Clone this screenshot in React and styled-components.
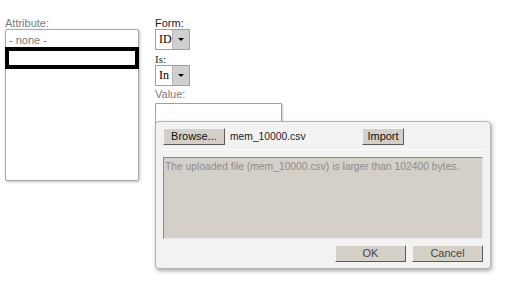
import React from "react";
import styled, { createGlobalStyle } from "styled-components";

const GlobalStyle = createGlobalStyle`
  html, body {
    margin: 0;
    padding: 0;
    background: #ffffff;
  }
  body {
    font-family: "Liberation Sans", Arial, sans-serif;
    font-size: 11px;
  }
`;

const Page = styled.div`
  position: relative;
  width: 532px;
  height: 296px;
  display: flex;
  gap: 16px;
  padding: 18px 0 0 5px;
  box-sizing: border-box;
`;

const Column = styled.div`
  display: flex;
  flex-direction: column;
`;

const Label = styled.div`
  color: ${(p) => (p.$muted ? "#7a7a7a" : "#222")};
  font-family: ${(p) => (p.$serif ? '"Liberation Serif", serif' : '"Liberation Sans", Arial, sans-serif')};
  font-size: 11px;
  line-height: 11px;
  height: 11px;
  margin-bottom: ${(p) => p.$gap || 0}px;
`;

const ListBox = styled.div`
  width: 134px;
  height: 152px;
  box-sizing: border-box;
  border: 1px solid #a9a9a9;
  border-radius: 2px;
  background: #fff;
  box-shadow: 1px 1px 3px rgba(0, 0, 0, 0.25);
  display: flex;
  flex-direction: column;
  padding-top: 3px;
`;

const ListItem = styled.div`
  color: #7a7a7a;
  height: 14px;
  line-height: 14px;
  padding-left: 3px;
`;

const Selected = styled.div`
  height: 22px;
  margin: 0 -1px;
  box-sizing: border-box;
  border: 4px solid #000;
  background: #fff;
`;

const Select = styled.div`
  width: 35px;
  height: 21px;
  box-sizing: border-box;
  border: 1px solid #a0a0a0;
  background: #fff;
  display: flex;
  margin-bottom: ${(p) => p.$gap || 0}px;
`;

const SelectValue = styled.span`
  flex: 1;
  font-family: "Liberation Serif", "Times New Roman", serif;
  font-size: 12px;
  line-height: 19px;
  padding-left: 3px;
  color: #000;
`;

const SelectArrow = styled.span`
  width: 16px;
  background: #d0d0d0;
  border-left: 1px solid #b8b8b8;
  display: flex;
  align-items: center;
  justify-content: center;
  &::after {
    content: "";
    border-left: 3px solid transparent;
    border-right: 3px solid transparent;
    border-top: 3px solid #000;
  }
`;

const TextInput = styled.div`
  width: 127px;
  height: 22px;
  box-sizing: border-box;
  border: 1px solid #a0a0a0;
  border-radius: 1px;
  background: #fff;
  box-shadow: 1px 1px 2px rgba(0, 0, 0, 0.2);
`;

const Dialog = styled.div`
  position: absolute;
  left: 155px;
  top: 121px;
  width: 336px;
  height: 148px;
  box-sizing: border-box;
  background: #f2f2f2;
  border: 1px solid #b5b5b5;
  border-radius: 4px;
  box-shadow: 1px 2px 4px rgba(0, 0, 0, 0.35);
  padding: 5px 6px 6px 6px;
  display: flex;
  flex-direction: column;
`;

const Toolbar = styled.div`
  display: flex;
  align-items: center;
  height: 18px;
  padding-left: 1px;
  padding-bottom: 4px;
  border-bottom: 1px solid #ffffff;
  margin-bottom: 7px;
`;

const Button = styled.button`
  width: ${(p) => p.$w}px;
  height: 17px;
  box-sizing: border-box;
  padding: 0;
  margin: 0;
  background: #d4d0c8;
  border: 1px solid;
  border-color: #f4f4f4 #5a5a5a #5a5a5a #f4f4f4;
  font-family: "Liberation Sans", Arial, sans-serif;
  font-size: 11px;
  color: ${(p) => (p.$dim ? "#444" : "#111")};
  line-height: 15px;
  margin-left: ${(p) => p.$ml || 0}px;
`;

const FileName = styled.span`
  color: #222;
  font-size: 10.3px;
  margin-left: 5px;
  width: 132px;
`;

const Message = styled.div`
  flex: 0 0 82px;
  box-sizing: border-box;
  margin-left: 1px;
  margin-right: 1px;
  background: #d4d0c8;
  border: 1px solid;
  border-color: #8a8a8a #e8e8e8 #e8e8e8 #8a8a8a;
  color: #8c8c8c;
  font-size: 10.3px;
  padding: 2px 1px;
  line-height: 13px;
`;

const Footer = styled.div`
  display: flex;
  justify-content: flex-end;
  gap: 6px;
  margin-top: 6px;
  padding-right: 1px;
`;

export default function App() {
  return (
    <>
      <GlobalStyle />
      <Page>
        <Column>
          <Label $muted $gap={0}>Attribute:</Label>
          <ListBox>
            <ListItem>- none -</ListItem>
            <Selected />
          </ListBox>
        </Column>
        <Column>
          <Label $gap={0}>Form:</Label>
          <Select $gap={4}>
            <SelectValue>ID</SelectValue>
            <SelectArrow />
          </Select>
          <Label $serif $gap={0}>Is:</Label>
          <Select $gap={3}>
            <SelectValue>In</SelectValue>
            <SelectArrow />
          </Select>
          <Label $muted $gap={3}>Value:</Label>
          <TextInput />
        </Column>
        <Dialog>
          <Toolbar>
            <Button $w={62}>Browse...</Button>
            <FileName>mem_10000.csv</FileName>
            <Button $w={42}>Import</Button>
          </Toolbar>
          <Message>The uploaded file (mem_10000.csv) is larger than 102400 bytes.</Message>
          <Footer>
            <Button $w={71} $dim>OK</Button>
            <Button $w={71} $dim>Cancel</Button>
          </Footer>
        </Dialog>
      </Page>
    </>
  );
}
